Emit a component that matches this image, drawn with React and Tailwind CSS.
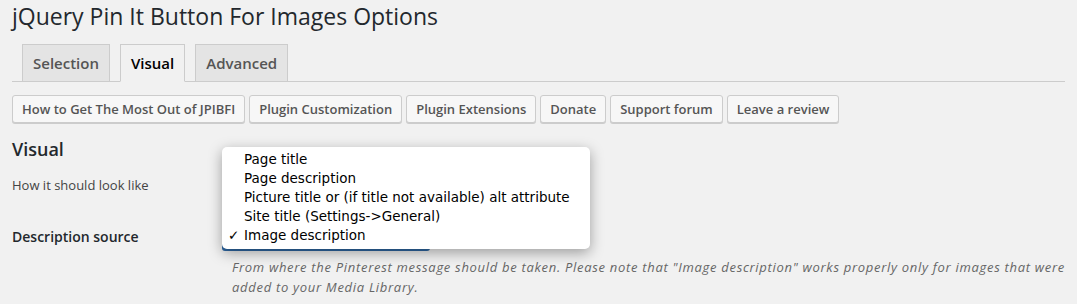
import React from 'react';

const tabs = ['Selection', 'Visual', 'Advanced'];
const links = [
    'How to Get The Most Out of JPIBFI',
    'Plugin Customization',
    'Plugin Extensions',
    'Donate',
    'Support forum',
    'Leave a review',
];
const options = [
    'Page title',
    'Page description',
    'Picture title or (if title not available) alt attribute',
    'Site title (Settings->General)',
    'Image description',
];

export default function App() {
    return (
        <div className="min-h-[304px] bg-[#f1f1f1] pl-[12px] pr-[8px] font-['Open_Sans',sans-serif] text-[#444]">
            {/* heading */}
            <h1 className="pt-[2px] text-[23px] leading-[29px] text-[#23282d]">
                jQuery Pin It Button For Images Options
            </h1>

            {/* tabs */}
            <div className="mt-[13px] mr-[4px] flex border-b border-[#ccc] pl-[10px]">
                {tabs.map((t) => (
                    <div
                        key={t}
                        className={
                            t === 'Visual'
                                ? 'mr-[10px] -mb-px h-[38px] border border-[#ccc] border-b-[#f1f1f1] bg-[#f1f1f1] px-[10px] text-[15px] leading-[36px] font-semibold text-black'
                                : 'mr-[10px] -mb-px h-[38px] border border-[#ccc] bg-[#e4e4e4] px-[10px] text-[15px] leading-[36px] font-semibold text-[#555]'
                        }
                    >
                        {t}
                    </div>
                ))}
            </div>

            {/* link buttons */}
            <div className="mt-[13px] flex gap-[4px]">
                {links.map((l) => (
                    <div
                        key={l}
                        className="h-[28px] rounded-[3px] border border-[#ccc] bg-[#f7f7f7] px-[9px] text-[13px] leading-[26px] font-semibold text-[#555] shadow-[0_1px_0_#ccc]"
                    >
                        {l}
                    </div>
                ))}
            </div>

            {/* section */}
            <h3 className="mt-[14px] text-[18px] leading-[24px] font-semibold text-[#23282d]">Visual</h3>
            <p className="mt-[14px] text-[13px] leading-[20px] text-[#444]">How it should look like</p>

            <div className="mt-[29px] flex">
                <div className="w-[210px] shrink-0 pt-[3px] text-[14px] leading-[20px] font-semibold text-[#23282d]">
                    Description source
                </div>
                <div className="relative flex-1 pl-[10px]">
                    <div className="-ml-[10px] h-[27px] w-[208px] rounded-b-[3px] bg-[#2f68a4]" />
                    {/* open select menu */}
                    <div className="absolute left-[0px] top-[-77px] w-[368px] rounded-[5px] bg-white pt-[3px] pb-[4px] shadow-[0_4px_14px_rgba(0,0,0,0.35)] font-['DejaVu_Sans',sans-serif] text-[13.5px] leading-[19px] text-black">
                        {options.map((o) => (
                            <div key={o} className="flex">
                                <span className="w-[22px] pl-[6px]">{o === 'Image description' ? '✓' : ''}</span>
                                <span>{o}</span>
                            </div>
                        ))}
                    </div>
                    <p className="mt-[6px] text-[13px] leading-[20px] tracking-[0.7px] italic text-[#666]">
                        From where the Pinterest message should be taken. Please note that "Image description" works properly only for images that were added to your Media Library.
                    </p>
                </div>
            </div>
        </div>
    );
}
